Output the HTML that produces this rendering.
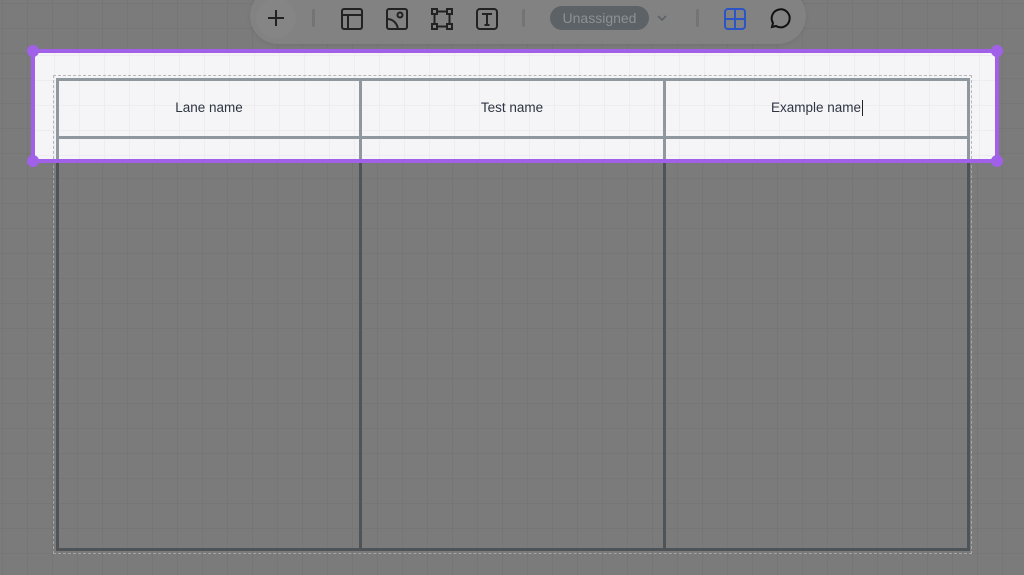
<!DOCTYPE html>
<html><head><meta charset="utf-8"><style>
*{margin:0;padding:0;box-sizing:border-box}
body{width:1024px;height:575px;overflow:hidden;position:relative;background:#7b7b7b;font-family:"Liberation Sans",sans-serif;
background-image:linear-gradient(to right,#767676 1px,transparent 1px),linear-gradient(to bottom,#767676 1px,transparent 1px);
background-size:25px 25px;background-position:2px 3px}
.a{position:absolute}
.tb{left:250px;top:-12px;width:556px;height:56px;border-radius:28px;background:#828282;box-shadow:0 1px 4px rgba(0,0,0,.08)}
.plusbg{left:256px;top:-2px;width:40px;height:40px;border-radius:20px;background:#858585}
.sep{width:3px;height:18px;background:#747474;top:9px;border-radius:2px}
.pill{left:550px;top:6px;width:99px;height:24px;border-radius:12px;background:#5d6266;color:#8c9195;font-size:14px;line-height:24px;text-align:center}
.hl{left:31px;top:49px;width:968px;height:114px;background:#f5f5f7;border:4px solid #a160e8;
background-image:linear-gradient(to right,#ededef 1px,transparent 1px),linear-gradient(to bottom,#ededef 1px,transparent 1px);background-size:25px 25px;background-position:-31px -48px}
.dot{width:12px;height:12px;border-radius:6px;background:#a160e8}
.v{width:3px;background:#4e5357}
.h{height:3px;background:#4e5357}
.lt{background:#8f989f}
.txt{top:100px;font-size:13.5px;color:#2e3542;text-align:center;width:300px}
</style></head><body>
<div class="a tb"></div>
<div class="a plusbg"></div>
<svg class="a" style="left:266px;top:8px" width="20" height="20"><path d="M10 2v16M2 10h16" stroke="#222" stroke-width="2"/></svg>
<div class="a sep" style="left:312px"></div>
<svg class="a" style="left:340px;top:7px" width="24" height="24" fill="none" stroke="#222" stroke-width="2"><rect x="2" y="2" width="20" height="20" rx="2"/><path d="M2 8h20M8 8v14"/></svg>
<svg class="a" style="left:385px;top:7px" width="24" height="24" fill="none" stroke="#222" stroke-width="2"><rect x="2" y="2" width="20" height="20" rx="2"/><circle cx="15" cy="8" r="2.5"/><path d="M2 12c6 0 10 4 11 10"/></svg>
<svg class="a" style="left:429px;top:6px" width="26" height="26" fill="none" stroke="#222" stroke-width="2"><rect x="3" y="3" width="5" height="5"/><rect x="18" y="3" width="5" height="5"/><rect x="3" y="18" width="5" height="5"/><rect x="18" y="18" width="5" height="5"/><path d="M8 5.5h10M8 20.5h10M5.5 8v10M20.5 8v10"/></svg>
<svg class="a" style="left:475px;top:7px" width="24" height="24" fill="none" stroke="#222" stroke-width="2"><rect x="2" y="2" width="20" height="20" rx="3"/><path d="M7 7h10M12 7v11M9.5 18h5"/></svg>
<div class="a sep" style="left:522px"></div>
<div class="a pill">Unassigned</div>
<svg class="a" style="left:656px;top:13px" width="12" height="10" fill="none" stroke="#5e6266" stroke-width="1.6"><path d="M2 3l4 4 4-4"/></svg>
<div class="a sep" style="left:696px"></div>
<svg class="a" style="left:723px;top:7px" width="24" height="24" fill="none" stroke="#2b55c4" stroke-width="2"><rect x="2" y="2" width="20" height="20" rx="3"/><path d="M12 2v20M2 12h20"/></svg>
<svg class="a" style="left:767px;top:6px" width="26" height="26" fill="none" stroke="#111" stroke-width="2"><path d="M5 21l1-4a9 9 0 1 1 3 3z"/></svg>

<div class="a" style="left:53px;top:75px;width:919px;height:479px;border:1px dashed #a6a6a6"></div>
<div class="a v" style="left:56px;top:160px;height:391px"></div>
<div class="a v" style="left:359px;top:160px;height:391px"></div>
<div class="a v" style="left:663px;top:160px;height:391px"></div>
<div class="a v" style="left:967px;top:160px;height:391px"></div>
<div class="a h" style="left:56px;top:548px;width:914px"></div>

<div class="a hl"></div>
<div class="a" style="left:53px;top:75px;width:919px;height:84px;border:1px dashed #b8b8bc;border-bottom:none"></div>
<div class="a v lt" style="left:56px;top:78px;height:81px"></div>
<div class="a v lt" style="left:359px;top:78px;height:81px"></div>
<div class="a v lt" style="left:663px;top:78px;height:81px"></div>
<div class="a v lt" style="left:967px;top:78px;height:81px"></div>
<div class="a h lt" style="left:56px;top:78px;width:914px"></div>
<div class="a h lt" style="left:56px;top:136px;width:914px"></div>
<div class="a txt" style="left:59px">Lane name</div>
<div class="a txt" style="left:362px">Test name</div>
<div class="a txt" style="left:666px">Example name</div>
<div class="a" style="left:862px;top:100px;width:1px;height:16px;background:#222"></div>
<div class="a dot" style="left:27px;top:45px"></div>
<div class="a dot" style="left:991px;top:45px"></div>
<div class="a dot" style="left:27px;top:155px"></div>
<div class="a dot" style="left:991px;top:155px"></div>
</body></html>
